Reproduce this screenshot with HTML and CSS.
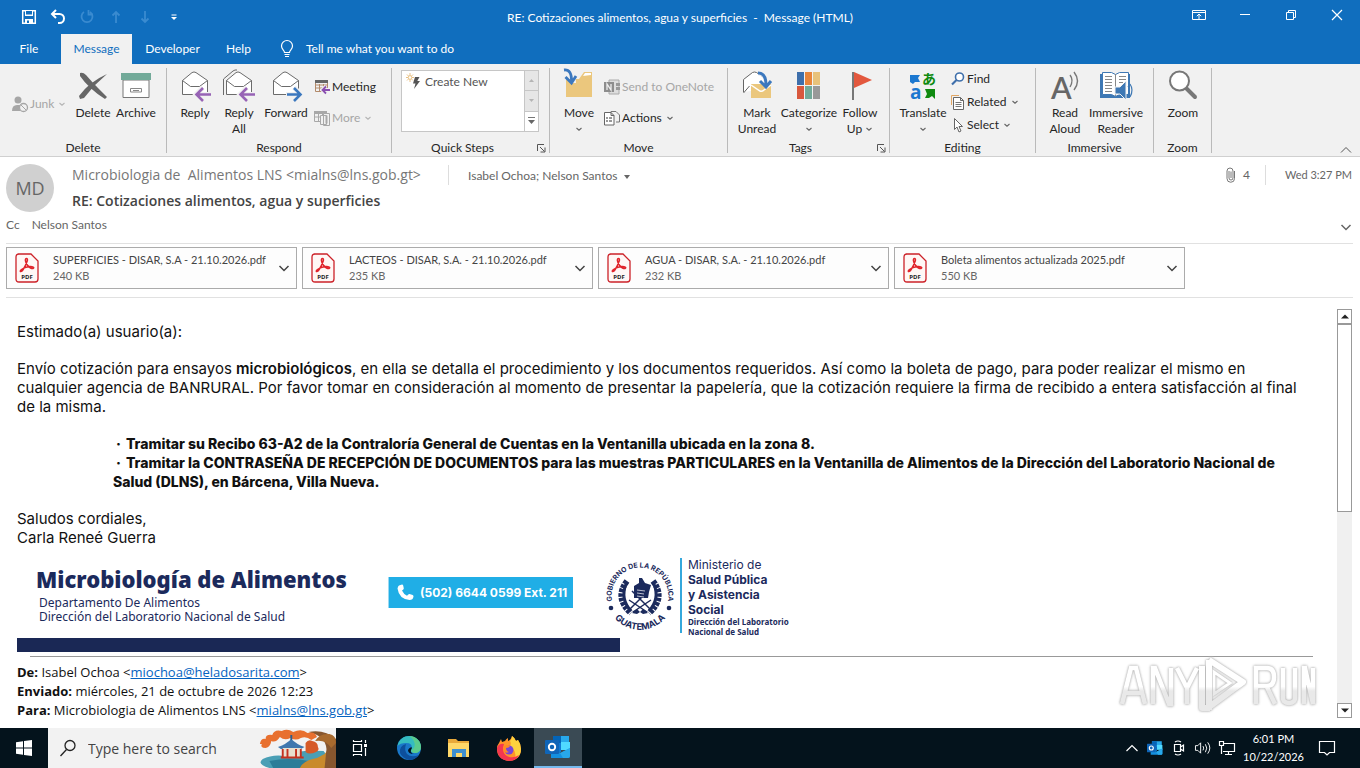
FILE: index.html
```html
<!DOCTYPE html>
<html lang="es">
<head>
<meta charset="utf-8">
<title>RE: Cotizaciones alimentos, agua y superficies - Message (HTML)</title>
<link rel="stylesheet" href="styles.css">
</head>
<body>
<svg class="defs" width="0" height="0" aria-hidden="true">
  <symbol id="chev" viewBox="0 0 8 8"><path d="M1.5 3l2.5 2.2L6.500 3" fill="none" stroke="currentColor" stroke-width="1.1"/></symbol>
  <symbol id="chevbig" viewBox="0 0 12 12"><path d="M1.500 4L6 8.500 10.500 4" fill="none" stroke="currentColor" stroke-width="1.500"/></symbol>
  <symbol id="launch" viewBox="0 0 9 9"><path d="M.5 7V.5H7M3 3l4.500 4.500M8 3.500V8H3.500" fill="none" stroke="#555"/></symbol>
  <symbol id="env" viewBox="0 0 34 34"><path d="M4.500 12.500L14 4.600q2-1.300 4 0l11.500 7.900v14h-25z" fill="#fff" stroke="#6b6b6b"/><path d="M4.500 12.500l8 6h9l8-6" fill="none" stroke="#6b6b6b"/></symbol>
  <symbol id="pdf" viewBox="0 0 24 30"><path d="M3 1h13l7 7v18q0 3-3 3H4q-3 0-3-3V4q0-3 3-3z" fill="#fff7f5" stroke="#cc2229" stroke-width="1.300"/><path d="M11.500 5.500c-2 0-1 4 .8 6.500 2 2.800 4.700 4 6 3.300s-.5-2-3.500-1.800c-3.500.2-8 2-9.300 4-.8 1.500 1 1.700 2.500-.7 1.600-2.500 3.500-6.500 4.300-9 .3-1.300.1-2.300-.8-2.300z" fill="none" stroke="#e0242b" stroke-width="1.500"/><text x="12" y="26" text-anchor="middle" class="pdf-text">PDF</text></symbol>
  <symbol id="outlook" viewBox="0 0 26 26"><path d="M8 2h16v9H8z" fill="#28a8ea"/><path d="M8 2h8v9H8z" fill="#0364b8"/><path d="M16 8h9v8h-9z" fill="#50d9ff"/><path d="M8 9h8v9H8z" fill="#0f78d4"/><path d="M6 24V14l10 5 9-5v8q0 2-2 2z" fill="#1490df"/><path d="M25 14v8q0 2-2 2h-5l-3-5z" fill="#28a8ea"/><rect y="6" width="14" height="14" rx="1" fill="#0f65b8"/><circle cx="7" cy="13" r="3.200" fill="none" stroke="#fff" stroke-width="1.900"/></symbol>
</svg>
<div class="app">
  <header class="titlebar">
    <div class="quick">
      <button aria-label="Save"><svg width="16" height="16" viewBox="0 0 16 16"><path d="M1.700 1.700h12.600v12.600H1.700z" fill="none" stroke="#fff" stroke-width="1.500"/><path d="M4 2h8v5H4zM4 10h8v5H4z" fill="#fff"/><path d="M5 2h6v3.500H5zM6 11.500h2V14H6z" fill="#106ebe"/></svg></button>
      <button aria-label="Undo"><svg width="16" height="16" viewBox="0 0 16 16"><path d="M6 1L2 5l4 4M2.500 5H9.500a4.200 4.200 0 010 9H8" fill="none" stroke="#fff" stroke-width="2"/></svg></button>
      <button aria-label="Redo" class="dim"><svg width="16" height="16" viewBox="0 0 16 16"><path d="M5 3a5.500 5.500 0 106 0M9.500 1v4.500H14" fill="none" stroke="currentColor" stroke-width="1.800"/></svg></button>
      <button aria-label="Previous item" class="dim"><svg width="16" height="16" viewBox="0 0 16 16"><path d="M8 14V3M4.500 6.500L8 3l3.500 3.500" fill="none" stroke="currentColor" stroke-width="1.800"/></svg></button>
      <button aria-label="Next item" class="dim"><svg width="16" height="16" viewBox="0 0 16 16"><path d="M8 2v11M4.500 9.500L8 13l3.500-3.500" fill="none" stroke="currentColor" stroke-width="1.800"/></svg></button>
      <button aria-label="Customize toolbar"><svg width="16" height="16" viewBox="0 0 16 16"><path d="M5.500 6h5" stroke="#fff"/><path d="M5 8h6l-3 3z" fill="#fff"/></svg></button>
    </div>
    <h1 class="window-title">RE: Cotizaciones alimentos, agua y superficies&nbsp; -&nbsp; Message (HTML)</h1>
    <div class="winbtns">
      <button aria-label="Ribbon display options"><svg width="14" height="12" viewBox="0 0 14 12"><path d="M.5 1.500h13v9H.5zM.5 3.500h13M7 10V5.500M4.800 7.200L7 5l2.200 2.200" fill="none" stroke="#fff"/></svg></button>
      <button aria-label="Minimize"><svg width="12" height="12" viewBox="0 0 12 12"><path d="M1 5.500h10" stroke="#fff"/></svg></button>
      <button aria-label="Restore"><svg width="12" height="12" viewBox="0 0 12 12"><path d="M1.500 3.500h7v7h-7zM3.500 3.500v-2h7v7h-2" fill="none" stroke="#fff"/></svg></button>
      <button aria-label="Close"><svg width="12" height="12" viewBox="0 0 12 12"><path d="M1 1l10 10M11 1L1 11" stroke="#fff" stroke-width="1.200"/></svg></button>
    </div>
  </header>
  <nav class="tabs">
    <button class="tab tab-file">File</button>
    <button class="tab tab-on">Message</button>
    <button class="tab tab-dev">Developer</button>
    <button class="tab tab-help">Help</button>
    <button class="tab tell"><svg width="14" height="18" viewBox="0 0 14 18"><path d="M4.500 12.500c0-2-3-3-3-6.500a5.500 5.500 0 0111 0c0 3.500-3 4.500-3 6.500zM4.500 14.500h5M5 16.500h4" fill="none" stroke="#fff" stroke-width="1.200"/></svg>Tell me what you want to do</button>
  </nav>

  <section class="ribbon">
    <div class="group g-delete">
      <div class="tools">
        <button class="small junk" disabled><svg width="16" height="16" viewBox="0 0 16 16"><circle cx="6" cy="4" r="3.500" fill="#a6a6a6"/><path d="M0 15q0-6 5-6h3v6z" fill="#a6a6a6"/><circle cx="11.500" cy="11.500" r="4" fill="#f1f1f1" stroke="#a6a6a6" stroke-width="1.300"/><path d="M9 9l5 5" stroke="#a6a6a6"/></svg>Junk<svg class="cv" width="8" height="8"><use href="#chev"/></svg></button>
        <button class="big w42"><svg width="34" height="36" viewBox="0 0 34 36"><path d="M4 5q3-1 6 2 6 7 12 13l9 9-2 2Q13 21 4 8zM31 6L18 18 8 30l-4 1-1-3Q13 14 31 6z" fill="#666"/></svg><span>Delete</span></button>
        <button class="big w44"><svg width="34" height="36" viewBox="0 0 34 36"><path d="M4 12h26v17.500H4z" fill="#fff" stroke="#777"/><path d="M2 5h30v7H2z" fill="#72aa99"/><path d="M11.500 20.500h11v3.500h-11zM14 22.500h6" fill="none" stroke="#888"/></svg><span>Archive</span></button>
      </div>
      <h2>Delete</h2>
    </div>
    <div class="group g-respond">
      <div class="tools">
        <button class="big w44"><svg width="34" height="36" viewBox="0 0 34 36"><use href="#env" width="34" height="34"/><path d="M18 26.500h16M25 19.500l-7 7 7 7" fill="none" stroke="#f1f1f1" stroke-width="5"/><path d="M19 26.500h14M25 20l-6.500 6.500 6.500 6.500" fill="none" stroke="#9763b5" stroke-width="2.600"/></svg><span>Reply</span></button>
        <button class="big w44"><svg width="34" height="36" viewBox="0 0 34 36"><path d="M1.500 27V11L11 3q2-1.500 4-1" fill="none" stroke="#6b6b6b"/><use href="#env" width="34" height="34"/><path d="M18 26.500h16M25 19.500l-7 7 7 7" fill="none" stroke="#f1f1f1" stroke-width="5"/><path d="M19 26.500h14M25 20l-6.500 6.500 6.500 6.500" fill="none" stroke="#9763b5" stroke-width="2.600"/></svg><span>Reply<br>All</span></button>
        <button class="big w50"><svg width="34" height="36" viewBox="0 0 34 36"><use href="#env" width="34" height="34"/><path d="M17 26.500h14M25 19.500l7 7-7 7" fill="none" stroke="#f1f1f1" stroke-width="5"/><path d="M18 26.500h13M25 20l6.500 6.500-6.500 6.500" fill="none" stroke="#3c78be" stroke-width="2.600"/></svg><span>Forward</span></button>
        <div class="stack two">
          <button class="small"><svg width="16" height="16" viewBox="0 0 16 16"><path d="M1.500 2.500h12v10h-12zM1.500 9h12M5.500 5v8M9.500 5v8M2 6h12" fill="none" stroke="#b28a6a"/><path d="M1 1h13v3H1z" fill="#666"/><path d="M8 11h8M12 7.500L8.500 11l3.500 3.500" fill="none" stroke="#f1f1f1" stroke-width="4"/><path d="M9 11h7M12 7.500L8.500 11l3.500 3.500" fill="none" stroke="#8a4fb0" stroke-width="1.800"/></svg>Meeting</button>
          <button class="small" disabled><svg width="16" height="16" viewBox="0 0 16 16"><path d="M.5 1.500h12v10H.5zM1 7h11M4.500 4v7M8.500 4v7" fill="none" stroke="#a8a8a8"/><path d="M0 1h13v3H0z" fill="#a8a8a8"/><path d="M6.500 5.500h6v9h-6zM9.500 3.500h6v12h-6z" fill="#f1f1f1" stroke="#a8a8a8"/><path d="M11.500 5.500h2v8h-2z" fill="#a8a8a8"/></svg>More<svg class="cv" width="8" height="8"><use href="#chev"/></svg></button>
        </div>
      </div>
      <h2>Respond</h2>
    </div>
    <div class="group g-quick">
      <div class="tools">
        <div class="gallery">
          <button class="gallery-item"><svg width="18" height="18" viewBox="0 0 18 18"><path d="M5 0v9M1 4.500h8M2 1.500l6 6M8 1.500l-6 6" stroke="#e3b36a" stroke-width=".8"/><circle cx="5" cy="4.500" r="1.800" fill="#fff" stroke="#e3b36a" stroke-width=".7"/><path d="M10 4h4.500l-2.200 4H15l-6 8 1.500-5.500H8z" fill="#555"/></svg>Create New</button>
          <div class="gallery-nav">
            <button aria-label="Row up" disabled><svg width="7" height="5"><path d="M1 4l2.500-3L6 4z" fill="#b4b4b4"/></svg></button>
            <button aria-label="Row down" disabled><svg width="7" height="5"><path d="M1 1l2.500 3L6 1z" fill="#b4b4b4"/></svg></button>
            <button aria-label="More quick steps"><svg width="7" height="8"><path d="M0 .5h7" stroke="#777"/><path d="M0 3h7L3.500 7z" fill="#666"/></svg></button>
          </div>
        </div>
      </div>
      <h2>Quick Steps</h2><button class="launcher" aria-label="Quick Steps options"><svg width="9" height="9"><use href="#launch"/></svg></button>
    </div>
    <div class="group g-move">
      <div class="tools">
        <button class="big w44"><svg width="34" height="36" viewBox="0 0 34 36"><path d="M4 11h13l5-7h8v25H4z" fill="#ebc77d"/><path d="M21 8l2-3h6v2z" fill="#fff"/><path d="M3 4q8-1 8 11" fill="none" stroke="#f1f1f1" stroke-width="6"/><path d="M2 2q8-1 7.500 12M3.500 9l6 6L14 8" fill="none" stroke="#3c78be" stroke-width="2.800"/></svg><span>Move<br><svg class="cv" width="8" height="8"><use href="#chev"/></svg></span></button>
        <div class="stack two">
          <button class="small" disabled><svg width="16" height="16" viewBox="0 0 16 16"><path d="M5 1h10v14H5z" fill="#ddd" stroke="#aaa"/><path d="M12 4h4v3h-4zM12 8h4v3h-4z" fill="#999"/><path d="M0 3h10v10H0z" fill="#8d8d8d"/><path d="M3 11V5l4 6V5" fill="none" stroke="#eee" stroke-width="1.300"/></svg>Send to OneNote</button>
          <button class="small"><svg width="16" height="16" viewBox="0 0 16 16"><path d="M7 2.500V1.500h5l3.500 3.500v7H12" fill="none" stroke="#777"/><path d="M.5 2.500H7l3 3v9.500H.5zM7 2.500v3h3" fill="#fff" stroke="#666"/><path d="M2 8h2M5 8h3M2 11h2M5 11h3" stroke="#777" stroke-width="1.300"/></svg>Actions<svg class="cv" width="8" height="8"><use href="#chev"/></svg></button>
        </div>
      </div>
      <h2>Move</h2>
    </div>
    <div class="group g-tags">
      <div class="tools">
        <button class="big w50"><svg width="34" height="36" viewBox="0 0 34 36"><path d="M3.500 24V11.500l9-7q2-1 4 0l10 7V21" fill="#fff" stroke="#666"/><path d="M3.500 25l6-7" stroke="#666"/><path d="M11 16h20v14H11z" fill="#ebc77d"/><path d="M11 17l9 6q2 1 4-1l7-5" fill="none" stroke="#fff" stroke-width="1.500"/><path d="M18 5q9 0 8 12" fill="none" stroke="#f1f1f1" stroke-width="5"/><path d="M18 5q8 0 8 12M20 13l6 6 5-6" fill="none" stroke="#3c78be" stroke-width="3"/></svg><span>Mark<br>Unread</span></button>
        <button class="big w54"><svg width="34" height="36" viewBox="0 0 34 36"><path d="M5 4h7v13H5z" fill="#3e6fab"/><path d="M13 4h7v13h-7z" fill="#e8853a"/><path d="M21 4h7v13h-7z" fill="#e8c27a"/><path d="M5 18h7v13H5z" fill="#d8583d"/><path d="M13 18h7v13h-7z" fill="#72aa99"/><path d="M21 18h7v13h-7z" fill="#999"/></svg><span>Categorize<br><svg class="cv" width="8" height="8"><use href="#chev"/></svg></span></button>
        <button class="big w48"><svg width="34" height="36" viewBox="0 0 34 36"><path d="M10 4v28" stroke="#777" stroke-width="2"/><path d="M11 4l18 8-18 8z" fill="#e3583e"/></svg><span>Follow<br>Up <svg class="cv" width="8" height="8"><use href="#chev"/></svg></span></button>
      </div>
      <h2>Tags</h2><button class="launcher" aria-label="Tags options"><svg width="9" height="9"><use href="#launch"/></svg></button>
    </div>
    <div class="group g-edit">
      <div class="tools">
        <button class="big w50"><svg width="34" height="36" viewBox="0 0 34 36"><path d="M4 7h10l-2 3 2 4H9l-2 2-3-2z" fill="#1c78d0"/><text x="4" y="31" class="tr-a">a</text><text x="16" y="16" class="tr-b">あ</text><path d="M19 21h10v10l-3-3-3 2h-4l2-4z" fill="#0f8a10"/></svg><span>Translate<br><svg class="cv" width="8" height="8"><use href="#chev"/></svg></span></button>
        <div class="stack three">
          <button class="small"><svg width="14" height="16" viewBox="0 0 14 16"><circle cx="8.500" cy="6" r="4" fill="#fff" stroke="#3e6fab" stroke-width="1.600"/><path d="M5.500 9L1 13.500" stroke="#3e6fab" stroke-width="2.200"/></svg>Find</button>
          <button class="small"><svg width="14" height="16" viewBox="0 0 14 16"><path d="M.5 11V1.500H8" fill="none" stroke="#e2a765"/><path d="M2.500 3.500h7l3 3v9h-10zM9.500 3.500v3h3" fill="#fff" stroke="#666"/><path d="M4.500 8.500h6M4.500 10.500h6M4.500 12.500h6" stroke="#777"/></svg>Related<svg class="cv" width="8" height="8"><use href="#chev"/></svg></button>
          <button class="small"><svg width="14" height="16" viewBox="0 0 14 16"><path d="M3.500 1.500v11L6 10l2 5 2-1-2-4.500h3.500z" fill="#fff" stroke="#666"/></svg>Select<svg class="cv" width="8" height="8"><use href="#chev"/></svg></button>
        </div>
      </div>
      <h2>Editing</h2>
    </div>
    <div class="group g-immersive">
      <div class="tools">
        <button class="big w44"><svg width="34" height="36" viewBox="0 0 34 36"><text x="3" y="31" class="read-a">A</text><path d="M22 7q4 5 0 12M26 4q7 9 0 18" fill="none" stroke="#777" stroke-width="1.400"/></svg><span>Read<br>Aloud</span></button>
        <button class="big w58"><svg width="34" height="36" viewBox="0 0 34 36"><path d="M1 6h30v24H1z" fill="#3e78b4"/><path d="M3.500 4.500h9l4 2 4-2h9v22h-9l-4 2-4-2h-9z" fill="#fff" stroke="#3e78b4"/><path d="M16.500 6v22M6 8.500h7M6 11.500h7M6 14.500h7M6 17.500h7M6 20.500h7M6 23.500h7M20 8.500h7M20 11.500h7M20 14.500h4" stroke="#888"/><path d="M16 19h5l6-6v19l-6-6h-5z" fill="#3e78b4" stroke="#f1f1f1"/><path d="M29 18q3 4 0 9M31 16q4 6 0 13" fill="none" stroke="#3e78b4" stroke-width="1.200"/></svg><span>Immersive<br>Reader</span></button>
      </div>
      <h2>Immersive</h2>
    </div>
    <div class="group g-zoom">
      <div class="tools">
        <button class="big w50"><svg width="34" height="36" viewBox="0 0 34 36"><path d="M20 20l9 9" stroke="#777" stroke-width="4" stroke-linecap="round"/><circle cx="13.500" cy="13" r="9.500" fill="#fff" stroke="#777" stroke-width="2"/></svg><span>Zoom</span></button>
      </div>
      <h2>Zoom</h2>
    </div>
    <button class="collapse" aria-label="Collapse the ribbon"><svg width="12" height="8"><path d="M1 6.500L6 1.500l5 5" fill="none" stroke="#555"/></svg></button>
  </section>

  <section class="mailhead">
    <div class="avatar">MD</div>
    <div class="who">
      <div class="who-line">
        <span class="from">Microbiologia de&nbsp; Alimentos LNS &lt;mialns@lns.gob.gt&gt;</span>
        <span class="to">Isabel Ochoa; Nelson Santos <svg width="7" height="5"><path d="M0 0h6L3 4z" fill="#666"/></svg></span>
        <span class="clip"><svg width="10" height="16" viewBox="0 0 10 16"><path d="M3 4v7a2 2 0 004 0V4a3 3 0 00-6 0v7.500a3.500 3.500 0 007.500 0V4M5 4.500V11" fill="none" stroke="#777"/></svg>4</span>
        <time class="when">Wed 3:27 PM</time>
      </div>
      <h2 class="subject">RE: Cotizaciones alimentos, agua y superficies</h2>
    </div>
    <div class="cc"><span>Cc</span><span>Nelson Santos</span><button aria-label="Expand header"><svg width="12" height="12"><use href="#chevbig"/></svg></button></div>
  </section>

  <section class="attachments">
    <div class="att"><svg width="24" height="30"><use href="#pdf"/></svg><div><b>SUPERFICIES - DISAR, S.A - 21.10.2026.pdf</b><span>240 KB</span></div><button aria-label="Attachment options"><svg width="12" height="12"><use href="#chevbig"/></svg></button></div>
    <div class="att"><svg width="24" height="30"><use href="#pdf"/></svg><div><b>LACTEOS - DISAR, S.A. - 21.10.2026.pdf</b><span>235 KB</span></div><button aria-label="Attachment options"><svg width="12" height="12"><use href="#chevbig"/></svg></button></div>
    <div class="att"><svg width="24" height="30"><use href="#pdf"/></svg><div><b>AGUA - DISAR, S.A. - 21.10.2026.pdf</b><span>232 KB</span></div><button aria-label="Attachment options"><svg width="12" height="12"><use href="#chevbig"/></svg></button></div>
    <div class="att"><svg width="24" height="30"><use href="#pdf"/></svg><div><b>Boleta alimentos actualizada 2025.pdf</b><span>550 KB</span></div><button aria-label="Attachment options"><svg width="12" height="12"><use href="#chevbig"/></svg></button></div>
  </section>

  <main class="reading">
    <article class="body">
      <p>Estimado(a) usuario(a):</p>
      <p>Envío cotización para ensayos <strong>microbiológicos</strong>, en ella se detalla el procedimiento y los documentos requeridos. Así como la boleta de pago, para poder realizar el mismo en<br>cualquier agencia de BANRURAL. Por favor tomar en consideración al momento de presentar la papelería, que la cotización requiere la firma de recibido a entera satisfacción al final<br>de la misma.</p>
      <ul class="steps">
        <li>Tramitar su Recibo 63-A2 de la Contraloría General de Cuentas en la Ventanilla ubicada en la zona 8.</li>
        <li>Tramitar la CONTRASEÑA DE RECEPCIÓN DE DOCUMENTOS para las muestras PARTICULARES en la Ventanilla de Alimentos de la Dirección del Laboratorio Nacional de<br>Salud (DLNS), en Bárcena, Villa Nueva.</li>
      </ul>
      <p>Saludos cordiales,<br>Carla Reneé Guerra</p>
      <div class="signature">
        <div class="sig-name"><b>Microbiología de Alimentos</b><span>Departamento De Alimentos</span><span>Dirección del Laboratorio Nacional de Salud</span></div>
        <div class="sig-phone"><svg width="17" height="17" viewBox="0 0 17 17"><path d="M2 1.500l3-1q1 0 1.200 1l.6 3q0 1-1.800 2 1.500 3.500 5 5.300 1.500-2 2.500-1.800l3.200 1q1 .5.800 1.500-.5 3.500-4 3.500Q2 15 .5 4.500 1 2 2 1.500z" fill="#fff"/></svg>(502) 6644 0599 Ext. 211</div>
        <svg class="seal" width="76" height="76" viewBox="-38 -38 76 76">
          <path id="arcTop" d="M-27.500 7A28.400 28.400 0 1127.500 7" fill="none"/>
          <path id="arcBottom" d="M-31.500 12A33.700 33.700 0 0031.500 12" fill="none"/>
          <text class="seal-top"><textPath href="#arcTop" startOffset="50%" text-anchor="middle">GOBIERNO DE LA REPÚBLICA</textPath></text>
          <text class="seal-bottom"><textPath href="#arcBottom" startOffset="50%" text-anchor="middle">GUATEMALA</textPath></text>
          <circle cx="-29" cy="12" r="2.300" fill="#1b2a5c"/><circle cx="29" cy="12" r="2.300" fill="#1b2a5c"/>
          <path d="M-13-15Q-26 2-9 17M13-15Q26 2 9 17" fill="none" stroke="#1b2a5c" stroke-width="6" stroke-dasharray="3.500 1"/>
          <path d="M-14-12Q-20 3-9 15M14-12Q20 3 9 15" fill="none" stroke="#1b2a5c" stroke-width="3"/>
          <path d="M-10 13L8-5M10 13L-8-5M-7 16L11 4M7 16l-18-12" stroke="#1b2a5c" stroke-width="1.500"/>
          <path d="M-6-10l5-3 0-5 3 0 3 5 6 2-2 7-1 6H-6z" fill="#1b2a5c"/><path d="M-3-6l8 1M-3-3l7 1M-3 0l7 1" stroke="#fff" stroke-width=".7"/>
          <path d="M-8 17l5-4 3 3 3-3 5 4-5 1-3-2-3 2z" fill="#1b2a5c"/>
        </svg>
        <div class="sig-min"><span>Ministerio de</span><b>Salud Pública</b><b>y Asistencia</b><b>Social</b><small>Dirección del Laboratorio</small><small>Nacional de Salud</small></div>
      </div>
      <div class="sig-bar"></div>
      <hr>
      <div class="quoted">
        <b>De:</b> Isabel Ochoa &lt;<a href="mailto:miochoa@heladosarita.com">miochoa@heladosarita.com</a>&gt;<br>
        <b>Enviado:</b> miércoles, 21 de octubre de 2026 12:23<br>
        <b>Para:</b> Microbiologia de Alimentos LNS &lt;<a href="mailto:mialns@lns.gob.gt">mialns@lns.gob.gt</a>&gt;
      </div>
    </article>
    <div class="scroll">
      <button aria-label="Scroll up"><svg width="8" height="5"><path d="M0 4.500h8L4 .5z" fill="#222"/></svg></button>
      <div class="thumb"></div>
      <button class="down" aria-label="Scroll down"><svg width="8" height="5"><path d="M0 .5h8L4 4.500z" fill="#222"/></svg></button>
    </div>
    <svg class="watermark" width="200" height="66" viewBox="0 0 200 66" aria-hidden="true">
      <defs><linearGradient id="fade" gradientUnits="userSpaceOnUse" x1="0" y1="10" x2="0" y2="55"><stop offset=".5" stop-color="#fff"/><stop offset=".6" stop-color="#e9e9e9"/></linearGradient></defs>
      <g class="mark" fill="none" stroke="url(#fade)" stroke-width="4.500"><path d="M5 50L14 14h5l9 36M9 39h15M36 50V14h2l14 36h2V14M60 14l10 20v16M70 34l10-20M139 50V14h11q7 0 7 9t-7 9h-11M150 33l8 17M166 14v30q0 5 6 5t6-5V14M187 50V14h1l8 36V14"/><path stroke-width="6" stroke-linejoin="round" d="M85 12v42h8M92 6v50M92 6l34 22-34 25"/><path d="M97 18v22l16-11z" stroke-width="3"/></g>
    </svg>
  </main>

  <footer class="taskbar">
    <button class="start" aria-label="Start"><svg width="16" height="16" viewBox="0 0 16 16"><path d="M0 2.200L7 1.200v6.300H0zM8 1l8-1v7.500H8zM0 8.500h7v6.300l-7-1zM8 8.500h8V16l-8-1z" fill="#fff"/></svg></button>
    <label class="search">
      <svg width="18" height="18" viewBox="0 0 18 18"><circle cx="11" cy="6.500" r="5" fill="none" stroke="#222" stroke-width="1.300"/><path d="M7.500 10.500L1.500 17" stroke="#222" stroke-width="1.300"/></svg>
      <input type="text" placeholder="Type here to search" aria-label="Type here to search">
      <svg class="art" width="78" height="39" viewBox="0 0 82 39" preserveAspectRatio="none">
        <path d="M5 30q10-5 24-3 8-6 40-5l13 17H12q-14-4-7-9z" fill="#4a9fb5"/><path d="M12 32q20-4 42 0l-4 7H16z" fill="#2b7d98"/>
        <path d="M44 39q4-8 18-10l8-4 12-14v28z" fill="#c98a2c"/><path d="M53 3Q71 7 72 20l-2 19h12V10Q70 0 53 3z" fill="#87562e"/>
        <path d="M2 15q1-6 6-5 0-5 7-4Q17 0 25 2q6-3 12 1 9-4 15 1 8-2 10 4l-6 3q-5-4-11-2-5 3-11 0-6 3-11-1-4 6-9 4-1 6-6 7-6 0-4-4z" fill="#e8702f"/>
        <path d="M50 14q3-4 7-2 6 1 6 6 2 3-2 5-7 3-11 0z" fill="#d65a28"/><path d="M60 12q5-8 15-7 7 1 7 9l-5 5q-6-9-17-7z" fill="#a86a2e"/>
        <path d="M21 18q9-3 14-8 5 5 14 8l-4 2H24z" fill="#3f77ae"/><path d="M26 19h19v9H26z" fill="#e8dfcf"/><path d="M26 20v9M31 20v9M40 20v9M45 20v9M24 28.500h24" stroke="#c3311f" stroke-width="2"/><path d="M35 6v5" stroke="#2d5d8c" stroke-width="2"/>
      </svg>
    </label>
    <button class="task task-view" aria-label="Task View"><svg width="18" height="16" viewBox="0 0 18 16"><path d="M2.500 4.500h8v7h-8zM2.500 0v1.500h8V0M2.500 16v-1.500h8V16M14.500 0v3M14.500 8v8" fill="none" stroke="#fff" stroke-width="1.200"/><path d="M13 4h3v3h-3z" fill="#fff"/></svg></button>
    <button class="task" aria-label="Microsoft Edge"><svg width="26" height="26" viewBox="0 0 26 26"><circle cx="13" cy="13" r="12" fill="#1a78c9"/><path d="M1.500 11C3 4 8 1 13 1c8 0 12 6 12 11 0 4-3 6-6 6-4 0-5-2-3.500-4.500Q17 8 10 8q-6 0-8.500 3z" fill="#35bcc0"/><path d="M13 1c8 0 12 6 12 11 0 4-3 6-6 6-2 0-4-1-3.500-3 6-3 3-11-2.500-14z" fill="#74d66b" opacity=".6"/><path d="M10 9q-7 2-6 9 2 5 9 7 6 0 10-5-8 3-12-1-3-4-1-10z" fill="#0d4f9c"/><path d="M15.500 12q1 1-.5 3-1 3 3 4-6 0-6-4 1-2 3.500-3z" fill="#04131c"/></svg></button>
    <button class="task" aria-label="File Explorer"><svg width="24" height="22" viewBox="0 0 24 22"><path d="M1 2h8l2 2h11v16H1z" fill="#e9a93a"/><path d="M1 6h21v14H1z" fill="#ffd869"/><path d="M5 12h14v8h-4v-4H9v4H5z" fill="#3e8fd0"/></svg></button>
    <button class="task" aria-label="Firefox"><svg width="26" height="26" viewBox="0 0 26 26"><path d="M3 8l2-4 1 3 3-1q1-2 3-3v3q3-1 4-5 3 2 4 5l2-1q3 4 3 9 0 11-12 12Q1 24 1 14q0-4 2-6z" fill="#ff9428"/><path d="M16 1q3 2 4 5l2-1q3 4 3 9 0 7-6 10 2-10-6-12 3-3 1-6 2-2 2-5z" fill="#ffd23e"/><path d="M1 13q0 12 12 13 7 0 10-6-6 4-12 1-6-4-3-12-5-1-7 4z" fill="#f5374f"/><circle cx="13" cy="15" r="4.500" fill="#7a45d6"/><path d="M8 11q3-2 6 0-1 2-4 2 0 3 3 4-4 2-6-2z" fill="#ff8a23"/></svg></button>
    <button class="task task-on" aria-label="Outlook"><svg width="26" height="26"><use href="#outlook"/></svg></button>
    <div class="tray">
      <svg width="14" height="16" viewBox="0 0 14 16"><path d="M1.500 11L7 5.500l5.500 5.500" fill="none" stroke="#fff" stroke-width="1.200"/></svg>
      <svg width="16" height="16"><use href="#outlook"/></svg>
      <svg width="16" height="16" viewBox="0 0 16 16"><path d="M3.500 4.500h6v7h-6zM9.500 7l3-2v6l-3-2M4 2q3-2 6 0M4 14q3 2 6 0" fill="none" stroke="#fff" stroke-width="1.200"/></svg>
      <svg width="16" height="16" viewBox="1 0 17 16"><path d="M1.500 5.500h2.500l3-3v11l-3-3H1.500zM9.500 6q1.500 2 0 4.500M12 4q3 4 0 8.500M14.500 2q4.500 6 0 12" fill="none" stroke="#fff"/></svg>
      <svg width="16" height="16" viewBox="1 0 16 16"><path d="M5 3.500h11.500v8H5M10.500 12v2.500M7 14.500h7M1.500 1.500h4v4h-4zM3.500 5.500V14" fill="none" stroke="#fff" stroke-width="1.200"/></svg>
      <div class="clock"><span>6:01 PM</span><span>10/22/2026</span></div>
      <svg class="note" width="18" height="18" viewBox="0 0 18 18"><path d="M1.500 2.500h15v11h-5L9 16l-2.500-2.500h-5z" fill="none" stroke="#fff" stroke-width="1.200"/></svg>
    </div>
  </footer>
</div>
</body>
</html>
```
FILE: styles.css
```css
* { box-sizing: border-box; }
body { margin: 0; font: 12px/16px Lato, "Open Sans", sans-serif; color: #262626; background: #fff; overflow: hidden; }
button { font: inherit; color: inherit; border: 0; padding: 0; margin: 0; background: none; }
svg { flex: none; overflow: visible; }
h1, h2, p, ul { margin: 0; padding: 0; font: inherit; }
.defs { position: absolute; }
.app { display: flex; flex-direction: column; height: 100vh; }

.titlebar { display: grid; grid-template-columns: 1fr auto 1fr; align-items: center; height: 34px; background: #106ebe; color: #fff; }
.window-title { padding-top: 2px; }
.quick { display: flex; gap: 13px; padding-left: 21px; }
.quick button { display: flex; }
.dim { color: #3a8bd0; }
.winbtns { display: flex; justify-content: flex-end; padding-bottom: 4px; }
.winbtns button { width: 46px; height: 30px; display: flex; align-items: center; justify-content: center; }

.tabs { display: flex; height: 30px; background: #106ebe; color: #fff; }
.tab { display: flex; align-items: center; justify-content: center; height: 30px; }
.tab-file { width: 61px; padding-right: 3px; }
.tab-on { width: 71px; background: #f1f1f1; color: #106ebe; }
.tab-dev { width: 81px; }
.tab-help { width: 51px; }
.tell { gap: 12px; padding-left: 16px; }

.ribbon { position: relative; display: flex; height: 93px; padding-top: 4px; background: #f1f1f1; border-bottom: 1px solid #d0d0d0; }
.group { position: relative; display: flex; flex-direction: column; height: 85px; border-right: 1px solid #bababa; }
.tools { display: flex; flex: 1; align-items: flex-start; }
.group h2 { text-align: center; height: 14px; line-height: 18px; }
.g-delete { width: 167px; } .g-delete .tools { padding-left: 12px; }
.g-respond { width: 225px; } .g-respond .tools { padding-left: 6px; }
.g-quick { width: 158px; } .g-quick .tools { padding: 2px 10px 0 9px; }
.g-quick h2 { padding-right: 16px; }
.g-move { width: 178px; } .g-move .tools { padding-left: 7px; }
.g-tags { width: 162px; } .g-tags .tools { padding-left: 4px; }
.g-tags h2 { padding-right: 16px; }
.g-edit { width: 146px; } .g-edit .tools { padding-left: 8px; }
.g-immersive { width: 118px; } .g-immersive .tools { padding-left: 7px; }
.g-zoom { width: 58px; } .g-zoom .tools { padding-left: 4px; }
.big { display: flex; flex-direction: column; align-items: center; gap: 1px; white-space: nowrap; line-height: 16px; }
.w42 { width: 42px; } .w44 { width: 44px; } .w48 { width: 48px; } .w50 { width: 50px; } .w54 { width: 54px; } .w58 { width: 58px; }
.small { display: flex; align-items: center; gap: 2px; height: 22px; white-space: nowrap; }
.small:disabled { color: #a6a6a6; }
.cv { color: #666; margin-left: 2px; }
.big br + .cv { margin-left: 0; }
.small:disabled .cv { color: #b5b5b5; }
.junk { width: 60px; align-self: center; }
.stack { display: flex; flex-direction: column; padding-left: 3px; }
.two { gap: 9px; padding-top: 8px; }
.three { gap: 1px; }
.gallery { display: flex; flex: 1; height: 62px; border: 1px solid #c6c6c6; background: #fff; color: #555; }
.gallery-item { display: flex; flex: 1; gap: 2px; padding-left: 3px; height: 22px; align-items: center; }
.gallery-nav { display: flex; flex-direction: column; width: 14px; border-left: 1px solid #c6c6c6; }
.gallery-nav button { flex: 1; display: flex; align-items: center; justify-content: center; border-bottom: 1px solid #c6c6c6; }
.gallery-nav button:last-child { border-bottom: 0; }
.gallery-nav button:disabled { background: #e6e6e6; }
.launcher { position: absolute; right: 3px; bottom: 0; display: flex; }
.collapse { position: absolute; right: 8px; bottom: 2px; display: flex; }
.tr-a { font: 700 19px "Open Sans", sans-serif; fill: #1c78d0; }
.tr-b { font: 700 14px "Noto Sans CJK JP", sans-serif; fill: #0f8a10; }
.read-a { font: 600 30px Lato, sans-serif; fill: #666; }

.mailhead { display: grid; grid-template-columns: 48px 1fr; column-gap: 18px; align-content: start; padding: 7px 8px 0 6px; height: 86px; color: #666; }
.avatar { display: flex; align-items: center; justify-content: center; width: 48px; height: 48px; border-radius: 50%; background: #d0d0d0; font: 18px "Open Sans", sans-serif; }
.who-line { display: flex; align-items: center; height: 22px; }
.from { font: 14px/20px "Open Sans", sans-serif; white-space: nowrap; width: 376px; color: #777; }
.to { border-left: 1px solid #ddd; padding-left: 19px; height: 20px; line-height: 22px; }
.to svg { margin-left: 3px; }
.clip { display: flex; align-items: center; gap: 7px; margin-left: auto; padding-right: 15px; height: 20px; border-right: 1px solid #ddd; }
.when { padding-left: 19px; font-size: 11px; }
.subject { font: 600 14px/20px "Open Sans", sans-serif; color: #444; padding-top: 5px; }
.cc { grid-column: 1 / -1; display: flex; gap: 12px; line-height: 16px; padding-top: 5px; }
.cc button { margin-left: auto; padding-top: 4px; }

.attachments { display: flex; gap: 5px; margin: 0 7px 0 6px; height: 55px; padding-top: 3px; border-top: 1px solid #e1e1e1; border-bottom: 1px solid #e1e1e1; }
.att { display: flex; align-items: center; width: 291px; height: 42px; border: 1px solid #ababab; padding: 0 6px 0 8px; background: #fdfdfd; font-size: 11px; line-height: 16px; color: #444; }
.att div { display: flex; flex-direction: column; flex: 1; padding-left: 14px; white-space: nowrap; }
.att b { font-weight: 400; }
.att span { color: #666; }
.att button { display: flex; }
.pdf-text { font: 700 6px "Open Sans", sans-serif; fill: #222; }

.reading { position: relative; display: flex; flex: 1; min-height: 0; padding: 11px 8px 10px 0; }
.body { flex: 1; min-width: 0; padding: 13px 0 0 17px; font: 15px/19px Inter, sans-serif; color: #111; white-space: nowrap; overflow: hidden; }
.body p { margin-bottom: 18px; }
.body p strong { font-weight: 600; }
.steps { list-style: none; margin-bottom: 18px; padding-left: 96px; font-size: 14px; font-weight: 800; }
.steps li::before { content: "·"; margin: 0 5px 0 3px; }
.signature { display: flex; height: 80px; margin-top: -7px; color: #1b2a5c; }
.sig-name { display: flex; flex-direction: column; width: 371px; padding: 8px 0 0 22px; font: 12px/14px "Noto Sans", sans-serif; }
.sig-name b { font: 900 22px/26px "Noto Sans", sans-serif; margin: 0 0 4px -3px; }
.sig-phone { display: flex; align-items: center; gap: 6px; width: 185px; height: 31px; margin-top: 19px; padding-left: 8px; background: #20aee6; border-left: 1px solid #9bd9f2; color: #fff; font: 700 12px Inter, sans-serif; }
.seal { margin: 0 2px 0 29px; }
.seal-top { font: 700 7px Inter, sans-serif; fill: #1b2a5c; }
.seal-bottom { font: 700 9px Inter, sans-serif; fill: #1b2a5c; }
.sig-min { display: flex; flex-direction: column; height: 75px; padding-left: 6px; border-left: 2px solid #35a8dc; font: 12px/14px Inter, sans-serif; }
.sig-min b { line-height: 15px; }
.sig-min small { font: 700 8px/10px "Noto Sans", sans-serif; }
.sig-bar { width: 603px; height: 14px; background: #1a2855; }
.body hr { margin: 4px 24px 6px 13px; border: 0; border-top: 1px solid #999; }
.quoted { font: 13px/19px "Open Sans", sans-serif; }
.quoted a { color: #0563c1; }
.scroll { display: flex; flex-direction: column; width: 15px; background: #f0f0f0; }
.scroll button { display: flex; align-items: center; justify-content: center; height: 15px; border: 1px solid #999; background: #fff; }
.thumb { height: 188px; border: 1px solid #999; background: #fff; }
.scroll .down { margin-top: auto; }
.watermark { position: absolute; right: 43px; bottom: 8px; }
.mark { filter: drop-shadow(0 0 1px #aaa) drop-shadow(0 0 1px #ddd); }

.taskbar { display: flex; height: 40px; background: #04131c; color: #fff; }
.start { width: 48px; display: flex; align-items: center; justify-content: center; }
.search { display: flex; align-items: center; width: 288px; background: #f2f2f2; padding-left: 11px; }
.search input { flex: 1; min-width: 0; border: 0; background: none; padding: 0 0 0 11px; font: 14px "Open Sans", sans-serif; outline: 0; }
.search input::placeholder { color: #444; opacity: 1; }
.art { align-self: flex-end; }
.task { display: flex; align-items: center; justify-content: center; width: 50px; }
.task-view { width: 48px; }
.task-on { width: 48px; background: #3a4a54; border-bottom: 2px solid #76b9ed; }
.tray { display: flex; align-items: center; gap: 8px; margin-left: auto; padding-right: 24px; }
.clock { display: flex; flex-direction: column; align-items: center; font-size: 11px; line-height: 18px; }
.note { margin-left: 6px; }
```
